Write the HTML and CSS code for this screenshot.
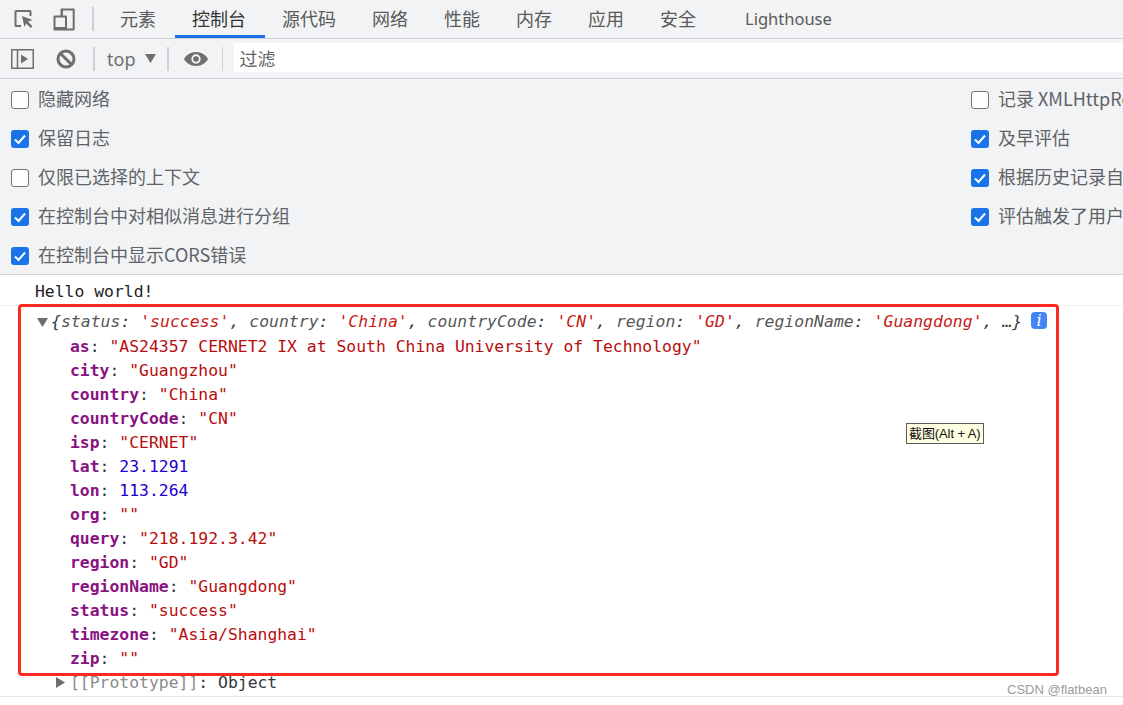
FILE: index.html
```html
<!DOCTYPE html>
<html lang="zh">
<head>
<meta charset="utf-8">
<title>DevTools</title>
<link rel="stylesheet" href="styles.css">
</head>
<body>
<div class="app">
  <header class="tabbar">
    <svg class="ic ic-inspect" viewBox="0 0 24 24"><path d="M9 20H4a1.500 1.500 0 0 1-1.500-1.500V4.500A1.500 1.500 0 0 1 4 3h14a1.500 1.500 0 0 1 1.500 1.500V9h-2V5H4.500v13H9z" fill="#6e6e6e"/><path d="M10 9l10.500 4-4.500 1.700 4.500 4.500-1.800 1.800-4.500-4.500L12.500 20z" fill="#6e6e6e"/></svg>
    <svg class="ic ic-device" viewBox="0 0 24 24"><path d="M9.500 1.500h12.200a1 1 0 0 1 1 1v20a1 1 0 0 1-1 1H2.500a1 1 0 0 1-1-1V9.500a1 1 0 0 1 1-1h6V2.500a1 1 0 0 1 1-1zm1.500 2v5h3a1 1 0 0 1 1 1v12h5.700V3.500zM3.500 10.500v9.500H13v-9.500z" fill="#6e6e6e"/></svg>
    <span class="sep sep-tab"></span>
    <nav class="tabs">
      <span class="tab">元素</span>
      <span class="tab active">控制台</span>
      <span class="tab">源代码</span>
      <span class="tab">网络</span>
      <span class="tab">性能</span>
      <span class="tab">内存</span>
      <span class="tab">应用</span>
      <span class="tab">安全</span>
      <span class="tab tab-lh">Lighthouse</span>
    </nav>
  </header>
  <div class="filterbar">
    <svg class="ic ic-side" viewBox="0 0 23 20"><path d="M.750.750h21.500v18.500H.750zM6.500 1v18" fill="none" stroke="#6e6e6e" stroke-width="1.500"/><path d="M10 5.500l7 4.500-7 4.500z" fill="#6e6e6e"/></svg>
    <svg class="ic ic-clear" viewBox="0 0 20 20"><circle cx="10" cy="10" r="8" fill="none" stroke="#6e6e6e" stroke-width="3"/><path d="M4.500 4.500l11 11" stroke="#6e6e6e" stroke-width="3"/></svg>
    <span class="sep sep-a"></span>
    <span class="top">top</span>
    <svg class="caret" viewBox="0 0 11 9"><path d="M0 0h11L5.500 9z" fill="#6e6e6e"/></svg>
    <span class="sep sep-b"></span>
    <svg class="ic ic-eye" viewBox="0 0 24 14"><path d="M12 0C6.500 0 2.300 3 0 7c2.300 4 6.500 7 12 7s9.700-3 12-7c-2.300-4-6.500-7-12-7z" fill="#6e6e6e"/><circle cx="12" cy="7" r="4.700" fill="#f1f3f4"/><circle cx="12" cy="7" r="2.800" fill="#6e6e6e"/></svg>
    <span class="sep sep-c"></span>
    <div class="filter">过滤</div>
  </div>
  <section class="settings">
    <div class="col">
      <label class="opt"><span class="box"></span><span class="lbl">隐藏网络</span></label>
      <label class="opt"><span class="box on"><svg viewBox="0 0 18 18"><path d="M4 9.500l3.500 3.500L14 5.500" fill="none" stroke="#fff" stroke-width="2"/></svg></span><span class="lbl">保留日志</span></label>
      <label class="opt"><span class="box"></span><span class="lbl">仅限已选择的上下文</span></label>
      <label class="opt"><span class="box on"><svg viewBox="0 0 18 18"><path d="M4 9.500l3.500 3.500L14 5.500" fill="none" stroke="#fff" stroke-width="2"/></svg></span><span class="lbl">在控制台中对相似消息进行分组</span></label>
      <label class="opt"><span class="box on"><svg viewBox="0 0 18 18"><path d="M4 9.500l3.500 3.500L14 5.500" fill="none" stroke="#fff" stroke-width="2"/></svg></span><span class="lbl">在控制台中显示CORS错误</span></label>
    </div>
    <div class="col col-right">
      <label class="opt"><span class="box"></span><span class="lbl">记录 XMLHttpRequest</span></label>
      <label class="opt"><span class="box on"><svg viewBox="0 0 18 18"><path d="M4 9.500l3.500 3.500L14 5.500" fill="none" stroke="#fff" stroke-width="2"/></svg></span><span class="lbl">及早评估</span></label>
      <label class="opt"><span class="box on"><svg viewBox="0 0 18 18"><path d="M4 9.500l3.500 3.500L14 5.500" fill="none" stroke="#fff" stroke-width="2"/></svg></span><span class="lbl">根据历史记录自动完成</span></label>
      <label class="opt"><span class="box on"><svg viewBox="0 0 18 18"><path d="M4 9.500l3.500 3.500L14 5.500" fill="none" stroke="#fff" stroke-width="2"/></svg></span><span class="lbl">评估触发了用户激活</span></label>
    </div>
  </section>
  <main class="console">
    <div class="msg hello">Hello world!</div>
    <div class="msg obj">
      <div class="summary"><svg class="tri" viewBox="0 0 11 9"><path d="M0 0h11L5.500 9z" fill="#6e6e6e"/></svg><i><span class="br">{</span><span class="k">status</span>: <span class="s">'success'</span>, <span class="k">country</span>: <span class="s">'China'</span>, <span class="k">countryCode</span>: <span class="s">'CN'</span>, <span class="k">region</span>: <span class="s">'GD'</span>, <span class="k">regionName</span>: <span class="s">'Guangdong'</span>, …<span class="br">}</span></i>
        <span class="info">i</span></div>
      <div class="row"><b>as</b>: <span class="s">"AS24357 CERNET2 IX at South China University of Technology"</span></div>
      <div class="row"><b>city</b>: <span class="s">"Guangzhou"</span></div>
      <div class="row"><b>country</b>: <span class="s">"China"</span></div>
      <div class="row"><b>countryCode</b>: <span class="s">"CN"</span></div>
      <div class="row"><b>isp</b>: <span class="s">"CERNET"</span></div>
      <div class="row"><b>lat</b>: <span class="n">23.1291</span></div>
      <div class="row"><b>lon</b>: <span class="n">113.264</span></div>
      <div class="row"><b>org</b>: <span class="s">""</span></div>
      <div class="row"><b>query</b>: <span class="s">"218.192.3.42"</span></div>
      <div class="row"><b>region</b>: <span class="s">"GD"</span></div>
      <div class="row"><b>regionName</b>: <span class="s">"Guangdong"</span></div>
      <div class="row"><b>status</b>: <span class="s">"success"</span></div>
      <div class="row"><b>timezone</b>: <span class="s">"Asia/Shanghai"</span></div>
      <div class="row"><b>zip</b>: <span class="s">""</span></div>
      <div class="row proto"><svg class="tri-r" viewBox="0 0 9 11"><path d="M0 0v11l9-5.500z" fill="#6e6e6e"/></svg><span class="p">[[Prototype]]</span>: Object</div>
    </div>
    <div class="redbox"></div>
    <div class="tooltip">截图(Alt + A)</div>
    <div class="wm">CSDN @flatbean</div>
  </main>
</div>
</body>
</html>
```
FILE: styles.css
```css
* { box-sizing: border-box; }
html, body { margin: 0; height: 100%; overflow: hidden; background: #fff; }
.app { width: 1123px; height: 705px; overflow: hidden; font-family: "Noto Sans CJK SC", "Noto Sans", sans-serif; display: flex; flex-direction: column; }
.tabbar { height: 39px; background: #f1f3f4; border-bottom: 1px solid #cdd0d4; display: flex; align-items: center; flex: none; }
.ic { display: block; flex: none; }
.ic-inspect { width: 24px; height: 24px; margin-left: 12px; }
.ic-device { width: 24px; height: 24px; margin-left: 16px; }
.sep { width: 2px; height: 24px; background: #cdd0d4; flex: none; }
.sep-tab { margin-left: 16px; }
.tabs { display: flex; height: 38px; margin-left: 1px; }
.tab { font-size: 18px; color: #5a5a5a; line-height: 37px; height: 38px; white-space: nowrap; }
.tab:nth-child(1) { width: 80px; padding-left: 25px; }
.tab.active { width: 90px; padding-left: 17px; color: #333; border-bottom: 3px solid #1a73e8; }
.tab:nth-child(3) { width: 90px; padding-left: 17px; }
.tab:nth-child(4) { width: 72px; padding-left: 17px; }
.tab:nth-child(5), .tab:nth-child(6), .tab:nth-child(7), .tab:nth-child(8) { width: 72px; padding-left: 17px; }
.tab.tab-lh { padding-left: 30px; width: 150px; font-size: 16.500px; font-family: "Noto Sans", sans-serif; color: #5a5a5a; }
.filterbar { height: 40px; background: #f1f3f4; border-bottom: 1px solid #cdd0d4; display: flex; align-items: center; flex: none; }
.ic-side { width: 23px; height: 20px; margin-left: 11px; }
.ic-clear { width: 20px; height: 20px; margin-left: 22px; }
.sep-a { margin-left: 17px; }
.top { font-family: "Noto Sans", sans-serif; font-size: 18px; color: #6e6e6e; margin-left: 12px; }
.caret { width: 11px; height: 9px; margin-left: 10px; flex: none; }
.sep-b { margin-left: 11px; }
.ic-eye { width: 24px; height: 14px; margin-left: 15px; }
.sep-c { margin-left: 14px; width: 1px; }
.filter { width: 900px; height: 29px; margin-left: 11px; background: #fff; font-size: 18px; line-height: 31px; color: #5f6368; padding-left: 5px; flex: none; margin-top: -2px; }
.settings { height: 196px; background: #f1f3f4; border-bottom: 1px solid #cdd0d4; display: flex; flex: none; padding-top: 1px; }
.col { width: 971px; flex: none; padding-left: 11px; }
.col-right { width: 300px; padding-left: 0; }
.opt { display: flex; align-items: center; height: 39px; font-size: 18px; color: #5f6368; white-space: nowrap; }
.lbl { line-height: 39px; margin-top: -2px; }
.box { width: 18px; height: 18px; border: 1.500px solid #767676; border-radius: 3px; background: #fff; margin-right: 9px; flex: none; }
.box.on { background: #1a73e8; border: 0; }
.box svg { display: block; width: 18px; height: 18px; }
.console { flex: 1; position: relative; font-family: "DejaVu Sans Mono", monospace; font-size: 16.400px; color: #303942; }
.msg { border-bottom: 1px solid #f0f0f0; }
.hello { height: 31px; padding-left: 35px; line-height: 33px; color: #222; }
.obj { height: 391px; border-bottom-color: #e8e8e8; }
.summary { height: 29px; line-height: 31px; padding-left: 37px; white-space: nowrap; position: relative; letter-spacing: .04px; }
.tri { width: 11px; height: 9px; margin-right: 3px; }
.summary i { color: #303942; }
.k { color: #565656; }
.br { color: #303942; }
.s { color: #b80d0d; }
.summary .s { color: #c41a16; }
.n { color: #1c00cf; }
.info { position: absolute; left: 1031px; top: 6px; width: 16px; height: 17px; background: #4285f4; border-radius: 4px; color: #fff; font: italic 400 16px/17px "DejaVu Serif", serif; text-align: center; letter-spacing: 0; }
.row { height: 24px; line-height: 24px; padding-left: 70px; white-space: pre; }
.row b { color: #881280; font-weight: 700; }
.proto { position: relative; }
.tri-r { position: absolute; left: 56px; top: 6px; width: 9px; height: 11px; }
.p { color: #8a8a8a; }
.redbox { position: absolute; left: 18px; top: 29px; width: 1041px; height: 372px; border: 3px solid #fb2a20; border-radius: 4px; }
.tooltip { position: absolute; left: 906px; top: 148px; width: 78px; height: 21px; background: #ffffe1; border: 1px solid #5c5c5c; color: #111; font: 13px/19px "Liberation Sans", "Noto Sans CJK SC", sans-serif; padding-left: 2px; white-space: pre; letter-spacing: -.1px; }
.wm { position: absolute; left: 1007px; top: 407px; font: 13px/16px "Liberation Sans", sans-serif; color: #9a9a9a; white-space: nowrap; }
```
